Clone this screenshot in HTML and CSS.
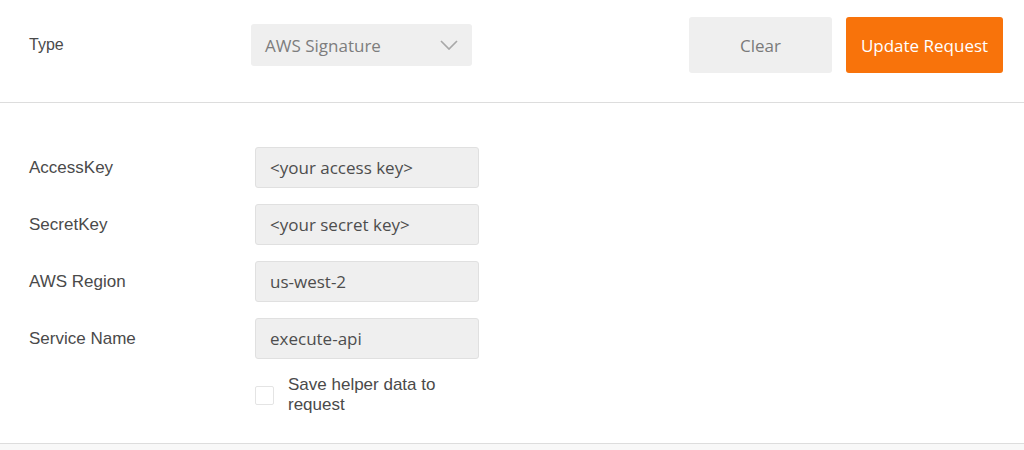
FILE: index.html
```html
<!DOCTYPE html>
<html>
<head>
<meta charset="utf-8">
<link rel="stylesheet" href="styles.css">
</head>
<body>
<div class="header">
  <div class="type-label">Type</div>
  <div class="select">
    <span class="select-text">AWS Signature</span>
    <svg class="chevron" width="18" height="10" viewBox="0 0 18 10"><path d="M1 1 L9 9 L17 1" fill="none" stroke="#a8a8a8" stroke-width="1.7"/></svg>
  </div>
  <div class="spacer"></div>
  <button class="btn btn-clear">Clear</button>
  <button class="btn btn-update">Update Request</button>
</div>
<div class="form">
  <div class="row">
    <div class="label">AccessKey</div>
    <div class="input">&lt;your access key&gt;</div>
  </div>
  <div class="row">
    <div class="label">SecretKey</div>
    <div class="input">&lt;your secret key&gt;</div>
  </div>
  <div class="row">
    <div class="label">AWS Region</div>
    <div class="input">us-west-2</div>
  </div>
  <div class="row">
    <div class="label">Service Name</div>
    <div class="input">execute-api</div>
  </div>
  <div class="row">
    <div class="label"></div>
    <div class="check">
      <span class="box"></span>
      <span class="check-text">Save helper data to request</span>
    </div>
  </div>
</div>
<div class="footer"></div>
</body>
</html>
```
FILE: styles.css
```css
html, body {
  margin: 0;
  padding: 0;
  background: #ffffff;
}
body {
  font-family: "Liberation Sans", Arial, sans-serif;
  color: #4a4a4a;
  height: 450px;
  overflow: hidden;
}
.header {
  display: flex;
  align-items: center;
  height: 56px;
  padding: 17px 21px 29px 29px;
  border-bottom: 1px solid #dddddd;
}
.type-label {
  width: 222px;
  font-size: 16px;
  color: #4a4a4a;
}
.select {
  width: 221px;
  height: 42px;
  box-sizing: border-box;
  background: #efefef;
  border-radius: 3px;
  display: flex;
  align-items: center;
  justify-content: space-between;
  padding: 0 14px 0 14px;
}
.select-text {
  font-family: "Open Sans", sans-serif;
  font-size: 17px;
  color: #7d7d7d;
}
.chevron {
  display: block;
}
.spacer {
  flex: 1;
}
.btn {
  height: 56px;
  border: none;
  border-radius: 3px;
  font-family: "Open Sans", sans-serif;
  font-size: 17px;
  font-weight: 500;
  padding: 0;
  margin: 0;
}
.btn-clear {
  width: 143px;
  background: #efefef;
  color: #7a7a7a;
  margin-right: 14px;
}
.btn-update {
  width: 157px;
  background: #f8730b;
  color: #ffffff;
}
.form {
  padding: 44px 0 28px 29px;
  display: flex;
  flex-direction: column;
  gap: 16px;
  border-bottom: 1px solid #dddddd;
}
.row {
  display: flex;
  align-items: center;
}
.label {
  width: 226px;
  font-size: 17px;
  color: #4a4a4a;
}
.input {
  width: 224px;
  height: 41px;
  box-sizing: border-box;
  background: #efefef;
  border: 1px solid #e0e0e0;
  border-radius: 3px;
  padding: 0 14px;
  display: flex;
  align-items: center;
  font-family: "Open Sans", sans-serif;
  font-size: 17px;
  color: #4d4d4d;
}
.check {
  width: 224px;
  display: flex;
  align-items: center;
}
.box {
  width: 19px;
  height: 19px;
  box-sizing: border-box;
  border: 1px solid #e4e4e4;
  border-radius: 2px;
  background: #ffffff;
  flex: none;
  margin-right: 14px;
}
.check-text {
  font-size: 17px;
  line-height: 20px;
  color: #4a4a4a;
}
.footer {
  height: 20px;
  background: #f8f8f8;
}
```
